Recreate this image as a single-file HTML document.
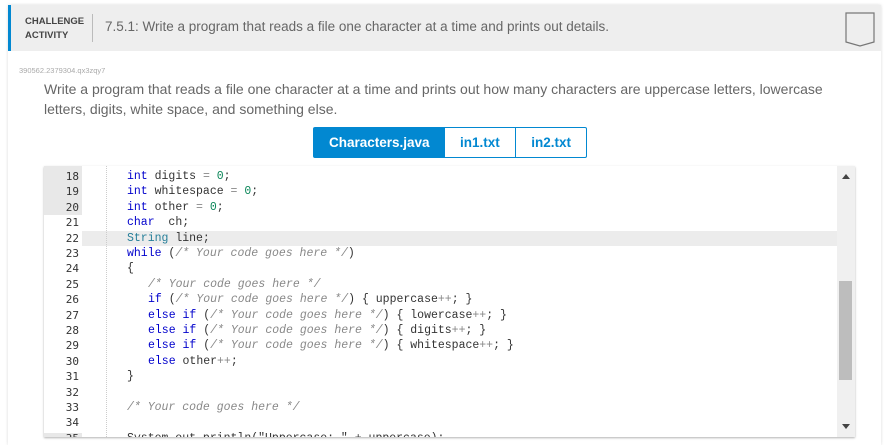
<!DOCTYPE html>
<html><head><style>
body{margin:0;width:885px;height:441px;background:#fff;overflow:hidden;font-family:"Liberation Sans",sans-serif;position:relative}
.card{position:absolute;left:8px;top:5px;width:873px;height:440px;background:#fff;box-shadow:0 0 3px rgba(0,0,0,.15)}
.hdr{position:absolute;left:8px;top:5px;width:873px;height:46px;background:#eeeeee;border-left:3px solid #0288d1;box-sizing:border-box}
.ca{position:absolute;left:14px;top:10px;font-size:9.5px;font-weight:bold;color:#444;line-height:14px}
.sep{position:absolute;left:81px;top:9px;width:1px;height:28px;background:#bbb}
.ttl{position:absolute;left:94px;top:14px;font-size:13.5px;color:#666}
.badge{position:absolute;left:845px;top:12px}
.id{position:absolute;left:19px;top:66px;font-size:7.5px;color:#aaa}
.desc{position:absolute;left:44px;top:79px;font-size:14px;color:#666;line-height:20px;width:810px}
.tabs{position:absolute;left:313px;top:127px;height:31px;display:flex;border:1px solid #0288d1;border-radius:2px;box-sizing:border-box;width:274px}
.tabs div{font-size:13.5px;font-weight:bold;color:#0288d1;display:flex;align-items:center;justify-content:center;height:100%}
.ed{position:absolute;left:44px;top:166px;width:811px;height:271px;background:#fff;overflow:hidden;box-shadow:0 1px 2px rgba(0,0,0,.3)}
.ln{position:absolute;left:0;width:35px;text-align:right;font-family:"DejaVu Sans Mono","Liberation Mono",monospace;font-size:11px;color:#333}
.code{position:absolute;left:0;top:0;font-family:"Liberation Mono",monospace;font-size:11.5px;white-space:pre;color:#333}
.row{position:absolute;height:15.4px;line-height:15.4px}
.k{color:#0000cc}.c{color:#888;font-style:italic}.n{color:#098658}.o{color:#888}
.sb{position:absolute;left:793px;top:0;width:18px;height:271px;background:#f0f0f0}
</style></head><body>
<div class="card"></div>
<div class="hdr">
<div class="ca">CHALLENGE<br>ACTIVITY</div>
<div class="sep"></div>
<div class="ttl">7.5.1: Write a program that reads a file one character at a time and prints out details.</div>
</div>
<svg class="badge" width="30" height="36" viewBox="0 0 30 36"><path d="M1 1H29V30L15 34L1 30Z" fill="none" stroke="#777" stroke-width="1.2"/></svg>
<div class="id">390562.2379304.qx3zqy7</div>
<div class="desc">Write a program that reads a file one character at a time and prints out how many characters are uppercase letters, lowercase letters, digits, white space, and something else.</div>
<div class="tabs"><div style="width:131px;background:#0288d1;color:#fff">Characters.java</div><div style="width:71px;border-right:1px solid #0288d1">in1.txt</div><div style="width:70px">in2.txt</div></div>
<div class="ed">
<div style="position:absolute;left:0;top:0;width:38px;height:49px;background:#e8e8e8"></div>
<div style="position:absolute;left:38px;top:65px;width:755px;height:15px;background:#ececec"></div>
<div style="position:absolute;left:62px;top:0;height:271px;border-left:1px dotted #ccc"></div>
<div style="position:absolute;left:0;top:267px;width:38px;height:4px;background:#e8e8e8"></div>
<div class="code">
<div class="row ln" style="top:3px">18</div><div class="row" style="top:3px;left:83px"><span class="k">int</span> digits <span class="o">=</span> <span class="n">0</span>;</div>
<div class="row ln" style="top:18.4px">19</div><div class="row" style="top:18.4px;left:83px"><span class="k">int</span> whitespace <span class="o">=</span> <span class="n">0</span>;</div>
<div class="row ln" style="top:33.8px">20</div><div class="row" style="top:33.8px;left:83px"><span class="k">int</span> other <span class="o">=</span> <span class="n">0</span>;</div>
<div class="row ln" style="top:49.2px">21</div><div class="row" style="top:49.2px;left:83px"><span class="k">char</span>  ch;</div>
<div class="row ln" style="top:64.6px">22</div><div class="row" style="top:64.6px;left:83px"><span style="color:#267f99">String</span> line;</div>
<div class="row ln" style="top:80px">23</div><div class="row" style="top:80px;left:83px"><span class="k">while</span> (<span class="c">/* Your code goes here */</span>)</div>
<div class="row ln" style="top:95.4px">24</div><div class="row" style="top:95.4px;left:83px">{</div>
<div class="row ln" style="top:110.8px">25</div><div class="row" style="top:110.8px;left:104px"><span class="c">/* Your code goes here */</span></div>
<div class="row ln" style="top:126.2px">26</div><div class="row" style="top:126.2px;left:104px"><span class="k">if</span> (<span class="c">/* Your code goes here */</span>) { uppercase<span class="o">++</span>; }</div>
<div class="row ln" style="top:141.6px">27</div><div class="row" style="top:141.6px;left:104px"><span class="k">else if</span> (<span class="c">/* Your code goes here */</span>) { lowercase<span class="o">++</span>; }</div>
<div class="row ln" style="top:157px">28</div><div class="row" style="top:157px;left:104px"><span class="k">else if</span> (<span class="c">/* Your code goes here */</span>) { digits<span class="o">++</span>; }</div>
<div class="row ln" style="top:172.4px">29</div><div class="row" style="top:172.4px;left:104px"><span class="k">else if</span> (<span class="c">/* Your code goes here */</span>) { whitespace<span class="o">++</span>; }</div>
<div class="row ln" style="top:187.8px">30</div><div class="row" style="top:187.8px;left:104px"><span class="k">else</span> other<span class="o">++</span>;</div>
<div class="row ln" style="top:203.2px">31</div><div class="row" style="top:203.2px;left:83px">}</div>
<div class="row ln" style="top:218.6px">32</div>
<div class="row ln" style="top:234px">33</div><div class="row" style="top:234px;left:83px"><span class="c">/* Your code goes here */</span></div>
<div class="row ln" style="top:249.4px">34</div>
<div class="row ln" style="top:264.8px">35</div><div class="row" style="top:264.8px;left:83px">System.out.println("Uppercase: " + uppercase);</div>
</div>
<div class="sb">
<svg style="position:absolute;left:5px;top:8px" width="8" height="5"><path d="M0 5L4 0L8 5Z" fill="#444"/></svg>
<div style="position:absolute;left:2px;top:115px;width:13px;height:99px;background:#bdbdbd"></div>
<svg style="position:absolute;left:5px;top:258px" width="8" height="5"><path d="M0 0L8 0L4 5Z" fill="#444"/></svg>
</div>
</div>
</body></html>
